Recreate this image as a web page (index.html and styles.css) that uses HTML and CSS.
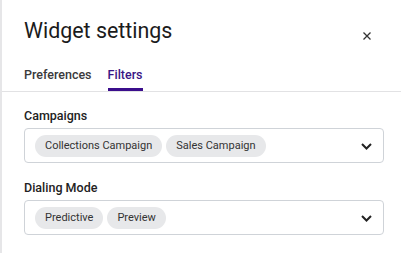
FILE: index.html
```html
<!DOCTYPE html>
<html>
<head>
<meta charset="utf-8">
<link rel="stylesheet" href="styles.css">
</head>
<body>
<div class="panel">
  <header class="head">
    <h1 class="title">Widget settings</h1>
    <button class="close" aria-label="Close">
      <svg width="8" height="8" viewBox="0 0 8 8"><path d="M0.5 0.5L7.5 7.5M7.5 0.5L0.5 7.5" stroke="#333" stroke-width="1.3" fill="none"/></svg>
    </button>
  </header>
  <nav class="tabs">
    <span class="tab">Preferences</span>
    <span class="tab active">Filters</span>
  </nav>
  <section class="body">
    <div class="field">
      <div class="label">Campaigns</div>
      <div class="select">
        <div class="chips">
          <span class="chip">Collections Campaign</span>
          <span class="chip">Sales Campaign</span>
        </div>
        <svg class="chev" width="11" height="7" viewBox="0 0 11 7"><path d="M1 1L5.5 5.5L10 1" stroke="#222" stroke-width="2" fill="none"/></svg>
      </div>
    </div>
    <div class="field">
      <div class="label">Dialing Mode</div>
      <div class="select">
        <div class="chips">
          <span class="chip">Predictive</span>
          <span class="chip">Preview</span>
        </div>
        <svg class="chev" width="11" height="7" viewBox="0 0 11 7"><path d="M1 1L5.5 5.5L10 1" stroke="#222" stroke-width="2" fill="none"/></svg>
      </div>
    </div>
  </section>
</div>
</body>
</html>
```
FILE: styles.css
```css
* { box-sizing: border-box; }
html, body { margin: 0; padding: 0; background: #fff; }
body { font-family: Roboto, "Liberation Sans", sans-serif; color: #222; }
.panel {
  min-height: 100vh;
  border-left: 2px solid #e6e6e8;
  background: #fff;
}
.head {
  display: flex;
  justify-content: space-between;
  align-items: flex-start;
  padding: 19px 22px 0 22px;
}
.title {
  margin: 0;
  font-size: 21.4px;
  line-height: 24px;
  font-weight: 400;
  color: #1b1b1b;
}
.close {
  width: 24px;
  height: 24px;
  margin-top: 5px;
  padding: 0;
  border: 0;
  background: transparent;
  display: flex;
  align-items: center;
  justify-content: center;
}
.tabs {
  display: flex;
  gap: 16px;
  margin-top: 19px;
  padding: 0 22px;
  border-bottom: 1px solid #e2e2e4;
}
.tab {
  font-size: 12.5px;
  line-height: 16px;
  font-weight: 500;
  color: #3a3a3c;
  padding-bottom: 5px;
  border-bottom: 3px solid transparent;
}
.tab.active {
  color: #3a1585;
  border-bottom-color: #3b0e8c;
}
.body {
  padding: 16px 17px 0 22px;
}
.field + .field { margin-top: 17px; }
.label {
  font-size: 12.5px;
  line-height: 16px;
  font-weight: 500;
  color: #222;
  margin-bottom: 4px;
}
.select {
  display: flex;
  align-items: center;
  justify-content: space-between;
  border: 1px solid #cfd3d8;
  border-radius: 4px;
  padding: 6px 11px 5px 10px;
}
.chips {
  display: flex;
  gap: 4px;
}
.chip {
  height: 22px;
  line-height: 22px;
  padding: 0 10px;
  border-radius: 11px;
  background: #e7e8ea;
  font-size: 11px;
  color: #333;
}
.chev { display: block; }
```
